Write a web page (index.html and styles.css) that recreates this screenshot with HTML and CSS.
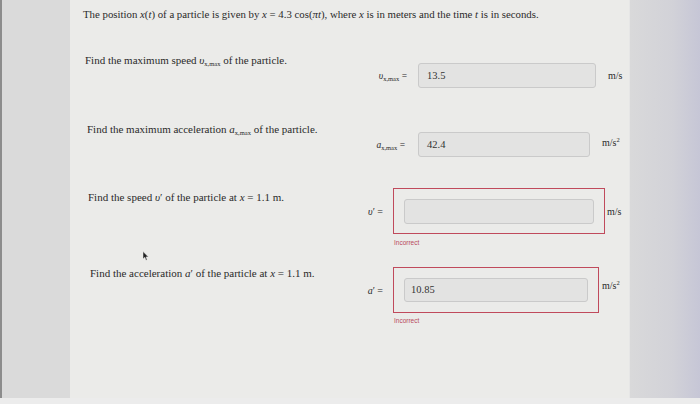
FILE: index.html
```html
<!DOCTYPE html>
<html>
<head>
<meta charset="utf-8">
<link rel="stylesheet" href="styles.css">
</head>
<body>
<div class="screen">
  <div class="side-left"></div>
  <div class="panel">
    <p class="title">The position <i>x</i>(<i>t</i>) of a particle is given by <i>x</i> = 4.3 cos(<i>πt</i>), where <i>x</i> is in meters and the time <i>t</i> is in seconds.</p>

    <p class="prompt p1">Find the maximum speed <i>υ</i><sub>x,max</sub> of the particle.</p>
    <div class="row r1">
      <span class="label"><i>υ</i><sub>x,max</sub> =</span>
      <div class="input w1">13.5</div>
      <span class="unit">m/s</span>
    </div>

    <p class="prompt p2">Find the maximum acceleration <i>a</i><sub>x,max</sub> of the particle.</p>
    <div class="row r2">
      <span class="label"><i>a</i><sub>x,max</sub> =</span>
      <div class="input w2">42.4</div>
      <span class="unit">m/s<sup>2</sup></span>
    </div>

    <p class="prompt p3">Find the speed <i>υ</i>′ of the particle at <i>x</i> = 1.1 m.</p>
    <div class="row r3">
      <span class="label"><i>υ</i>′ =</span>
      <div class="wrong w3"><div class="input"></div></div>
      <span class="unit">m/s</span>
    </div>
    <p class="incorrect i3">Incorrect</p>

    <p class="prompt p4">Find the acceleration <i>a</i>′ of the particle at <i>x</i> = 1.1 m.</p>
    <div class="row r4">
      <span class="label"><i>a</i>′ =</span>
      <div class="wrong w4"><div class="input">10.85</div></div>
      <span class="unit">m/s<sup>2</sup></span>
    </div>
    <p class="incorrect i4">Incorrect</p>

    <svg class="cursor" width="7" height="10" viewBox="0 0 7 10"><path d="M1 0.5 L1 8 L2.8 6.3 L4 9.2 L5.2 8.7 L4 5.9 L6.4 5.9 Z" fill="#222" stroke="#eee" stroke-width="0.5"/></svg>
  </div>
  <div class="side-right"></div>
</div>
<div class="bottom"></div>
</body>
</html>
```
FILE: styles.css
```css
html, body {
  margin: 0;
  padding: 0;
  width: 700px;
  height: 404px;
  overflow: hidden;
  background: #dcdcdc;
  font-family: "Liberation Serif", "Times New Roman", serif;
  color: #2a2a2a;
}
.screen {
  display: flex;
  height: 398px;
}
.side-left {
  width: 68px;
  background: #dadada;
  border-left: 2px solid #8c8c8c;
}
.side-right {
  width: 70px;
  background: linear-gradient(to right, #d9d9da, #d2d2d8 60%, #c6c6d6);
  border-left: 1px solid #e6e6e6;
}
.panel {
  flex: 1;
  position: relative;
  background: #ebebe9;
  padding: 0 0 0 13px;
}
.bottom {
  height: 6px;
  background: #ececec;
}
p { margin: 0; }
.title {
  font-size: 10.8px;
  line-height: 14px;
  margin-top: 7px;
}
.prompt {
  font-size: 11px;
  line-height: 14px;
  padding-left: 2px;
}
sub, sup {
  font-size: 6.5px;
  line-height: 0;
}
sub { vertical-align: -2px; }
sup { vertical-align: 4px; }
.p1 { margin-top: 32px; }
.p2 { margin-top: 34px; padding-left: 4px; }
.p3 { margin-top: 33px; padding-left: 5px; }
.p4 { margin-top: 18px; padding-left: 7px; }
.row {
  display: flex;
  align-items: center;
  font-size: 10px;
}
.label {
  text-align: right;
  flex: none;
}
.r1 { margin-top: -4px; }
.r1 .label { width: 324px; margin-right: 11px; font-size: 9.5px; }
.r2 { margin-top: -4px; }
.r2 .label { width: 322px; margin-right: 13px; font-size: 9.5px; }
.r3 { margin-top: -16px; }
.r3 .label { width: 300px; margin-right: 10px; }
.r4 { margin-top: -13px; }
.r4 .label { width: 300px; margin-right: 10px; }
.input {
  box-sizing: border-box;
  height: 25px;
  background: #e3e3e2;
  border: 1px solid #cacaca;
  border-radius: 3px;
  padding-left: 8px;
  line-height: 23px;
  font-size: 10.5px;
  color: #333;
}
.w1 { width: 178px; }
.w2 { width: 172px; }
.wrong {
  box-sizing: border-box;
  height: 46px;
  border: 1.5px solid #c04a5c;
  padding: 10px 10px 0 10px;
}
.w3 { width: 212px; }
.w4 { width: 206px; }
.w4 .input { height: 24px; line-height: 22px; padding-left: 6px; }
.unit {
  font-size: 10px;
  margin-left: 12px;
}
.r3 .unit, .r4 .unit { margin-left: 2px; }
.r4 .unit { margin-left: 3px; margin-top: -10px; }
.r2 .unit { margin-left: 12px; margin-top: -4px; }
.incorrect {
  font-family: "Liberation Sans", Arial, sans-serif;
  font-size: 6.5px;
  line-height: 10px;
  color: #b8485c;
  padding-left: 311px;
}
.i3 { margin-top: 4px; }
.i4 { margin-top: 3px; }
.cursor {
  position: absolute;
  left: 72px;
  top: 251px;
}
```
